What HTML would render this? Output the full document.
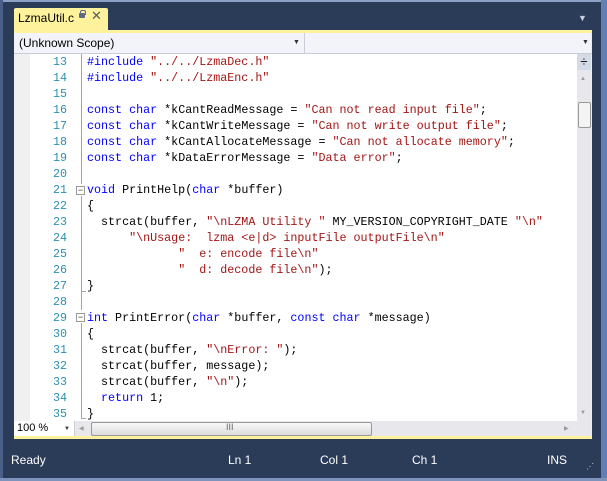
<!DOCTYPE html>
<html><head><style>
body{margin:0;width:607px;height:481px;background:#2b3c59;position:relative;overflow:hidden;font-family:"Liberation Sans",sans-serif}
.abs{position:absolute}
.code{font-family:"Liberation Mono",monospace;font-size:11.7px;line-height:16px;white-space:pre;color:#000}
.k{color:#0000ff}.s{color:#a31515}.n{color:#2b91af}
</style></head><body>
<div class="abs" style="left:0;top:0;width:607px;height:2px;background:#8aa0c4"></div>
<div class="abs" style="left:0;top:0;width:3px;height:481px;background:#4a6089"></div>
<div class="abs" style="left:601px;top:0;width:6px;height:481px;background:#5f7fb5"></div>
<div class="abs" style="left:0;top:478px;width:607px;height:3px;background:#7d93bb"></div>
<!-- tab -->
<div class="abs" style="left:14px;top:8px;width:94px;height:25px;background:#fff29d;border-radius:2px 2px 0 0"></div>
<div class="abs" style="left:18px;top:11px;font-size:12px;color:#000">LzmaUtil.c</div>
<div class="abs" style="left:79px;top:13px;width:6px;height:5px;background:#5a6a8a;border-radius:1px"></div>
<div class="abs" style="left:80px;top:10px;width:4px;height:4px;border:1px solid #5a6a8a;border-bottom:none;border-radius:2px 2px 0 0"></div>
<div class="abs" style="left:91px;top:8px;font-size:13px;color:#5a5a5a">✕</div>
<div class="abs" style="left:578px;top:13px;color:#c8d0e0;font-size:9px">▼</div>
<!-- frame -->
<div class="abs" style="left:14px;top:30px;width:578px;height:409px;background:#fff29d"></div>
<div class="abs" style="left:14px;top:33px;width:290px;height:20px;background:#f2f4f9;border-right:1px solid #c8cdd8"></div>
<div class="abs" style="left:305px;top:33px;width:286px;height:20px;background:#f2f4f9"></div>
<div class="abs" style="left:19px;top:36px;font-size:12px;color:#000">(Unknown Scope)</div>
<div class="abs" style="left:293px;top:39px;font-size:7px;color:#333">▼</div>
<div class="abs" style="left:582px;top:39px;font-size:7px;color:#333">▼</div>
<div class="abs" style="left:14px;top:53px;width:578px;height:1px;background:#c8cdd8"></div>
<!-- editor -->
<div class="abs" style="left:14px;top:54px;width:563px;height:367px;background:#fff;overflow:hidden">
 <div class="abs" style="left:0;top:0;width:16px;height:367px;background:#f0f0f0"></div>
 <div class="abs code n" style="left:20px;top:0;width:33px;text-align:right">13
14
15
16
17
18
19
20
21
22
23
24
25
26
27
28
29
30
31
32
33
34
35</div>
 <div class="abs" style="left:67px;top:0;width:1px;height:130px;background:#a5a5a5"></div>
 <div class="abs" style="left:62px;top:132px;width:7px;height:7px;border:1px solid #999;background:#fff;font-size:9px;line-height:7px;text-align:center;color:#333">−</div>
 <div class="abs" style="left:67px;top:142px;width:4px;height:95px;border-left:1px solid #a5a5a5;border-bottom:1px solid #a5a5a5"></div>
 <div class="abs" style="left:67px;top:238px;width:1px;height:18px;background:#a5a5a5"></div>
 <div class="abs" style="left:62px;top:259px;width:7px;height:7px;border:1px solid #999;background:#fff;font-size:9px;line-height:7px;text-align:center;color:#333">−</div>
 <div class="abs" style="left:67px;top:269px;width:4px;height:95px;border-left:1px solid #a5a5a5;border-bottom:1px solid #a5a5a5"></div>
 <div class="abs code" style="left:73px;top:0"><span class="k">#include</span> <span class="s">"../../LzmaDec.h"</span>
<span class="k">#include</span> <span class="s">"../../LzmaEnc.h"</span>

<span class="k">const</span> <span class="k">char</span> *kCantReadMessage = <span class="s">"Can not read input file"</span>;
<span class="k">const</span> <span class="k">char</span> *kCantWriteMessage = <span class="s">"Can not write output file"</span>;
<span class="k">const</span> <span class="k">char</span> *kCantAllocateMessage = <span class="s">"Can not allocate memory"</span>;
<span class="k">const</span> <span class="k">char</span> *kDataErrorMessage = <span class="s">"Data error"</span>;

<span class="k">void</span> PrintHelp(<span class="k">char</span> *buffer)
{
  strcat(buffer, <span class="s">"\nLZMA Utility "</span> MY_VERSION_COPYRIGHT_DATE <span class="s">"\n"</span>
      <span class="s">"\nUsage:  lzma &lt;e|d&gt; inputFile outputFile\n"</span>
             <span class="s">"  e: encode file\n"</span>
             <span class="s">"  d: decode file\n"</span>);
}

<span class="k">int</span> PrintError(<span class="k">char</span> *buffer, <span class="k">const</span> <span class="k">char</span> *message)
{
  strcat(buffer, <span class="s">"\nError: "</span>);
  strcat(buffer, message);
  strcat(buffer, <span class="s">"\n"</span>);
  <span class="k">return</span> 1;
}</div>
</div>
<!-- vscroll -->
<div class="abs" style="left:577px;top:54px;width:14px;height:367px;background:#e8e8ec"></div>
<div class="abs" style="left:577px;top:54px;width:14px;height:16px;background:#d5dbe6;font-size:13px;line-height:16px;text-align:center;color:#000">÷</div>
<div class="abs" style="left:580px;top:76px;font-size:6px;color:#999">▲</div>
<div class="abs" style="left:578px;top:102px;width:11px;height:24px;background:#f4f4f4;border:1px solid #999;border-radius:2px"></div>
<div class="abs" style="left:580px;top:410px;font-size:6px;color:#999">▼</div>
<!-- hscroll -->
<div class="abs" style="left:14px;top:421px;width:577px;height:15px;background:#e8e8ec"></div>
<div class="abs" style="left:14px;top:421px;width:60px;height:15px;background:#fff;border-right:1px solid #ccc"></div>
<div class="abs" style="left:17px;top:422px;font-size:11px;color:#000">100 %</div>
<div class="abs" style="left:64px;top:426px;font-size:6px;color:#333">▼</div>
<div class="abs" style="left:79px;top:425px;font-size:6px;color:#999">◀</div>
<div class="abs" style="left:91px;top:422px;width:279px;height:12px;background:linear-gradient(#f8f8f8,#dcdcdc);border:1px solid #999;border-radius:2px"></div>
<div class="abs" style="left:226px;top:422px;font-size:9px;color:#666">III</div>
<div class="abs" style="left:564px;top:425px;font-size:6px;color:#999">▶</div>
<!-- status -->
<div class="abs" style="left:11px;top:453px;font-size:12px;color:#fff">Ready</div>
<div class="abs" style="left:228px;top:453px;font-size:12px;color:#fff">Ln 1</div>
<div class="abs" style="left:320px;top:453px;font-size:12px;color:#fff">Col 1</div>
<div class="abs" style="left:412px;top:453px;font-size:12px;color:#fff">Ch 1</div>
<div class="abs" style="left:547px;top:453px;font-size:12px;color:#fff">INS</div>
<div class="abs" style="left:586px;top:462px;font-size:8px;color:#ccc">⋰</div>
</body></html>
